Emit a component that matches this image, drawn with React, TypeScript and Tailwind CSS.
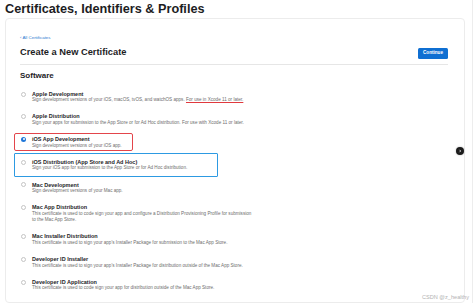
const certs = [
  {
    name: "Apple Development",
    desc: "Sign development versions of your iOS, macOS, tvOS, and watchOS apps.",
    note: "For use in Xcode 11 or later.",
  },
  {
    name: "Apple Distribution",
    desc: "Sign your apps for submission to the App Store or for Ad Hoc distribution. For use with Xcode 11 or later.",
  },
  { name: "iOS App Development", desc: "Sign development versions of your iOS app.", mark: "red", checked: true },
  {
    name: "iOS Distribution (App Store and Ad Hoc)",
    desc: "Sign your iOS app for submission to the App Store or for Ad Hoc distribution.",
    mark: "blue",
  },
  { name: "Mac Development", desc: "Sign development versions of your Mac app." },
  {
    name: "Mac App Distribution",
    desc: "This certificate is used to code sign your app and configure a Distribution Provisioning Profile for submission",
    more: "to the Mac App Store.",
  },
  {
    name: "Mac Installer Distribution",
    desc: "This certificate is used to sign your app's Installer Package for submission to the Mac App Store.",
  },
  {
    name: "Developer ID Installer",
    desc: "This certificate is used to sign your app's Installer Package for distribution outside of the Mac App Store.",
  },
  {
    name: "Developer ID Application",
    desc: "This certificate is used to code sign your app for distribution outside of the Mac App Store.",
  },
];

export default function App() {
  return (
    <div className="relative h-[303px] w-[474px] overflow-hidden bg-white font-['Liberation_Sans',Arial,sans-serif] text-[#1d1d1f]">
      <div className="h-full w-[473px] border-r border-[#ededed]">
        <h1 className="pl-[5px] pt-[2px] text-[12.7px] font-bold leading-[15px]">
          Certificates, Identifiers &amp; Profiles
        </h1>

        {/* card */}
        <div className="ml-[5px] mt-px w-[460px] rounded-[4px] border border-[#ececec] pb-[10px] pl-[14px] pr-[16px] pt-[16px]">
          <div className="text-[4.4px] leading-[6px] text-[#2b7bd0]">‹ All Certificates</div>
          <div className="mt-[7px] flex items-start justify-between">
            <div className="text-[9.3px] font-bold leading-[9px]">Create a New Certificate</div>
            <button className="flex h-[11px] w-[30px] items-center justify-center rounded-[1.5px] bg-[#0f6fd2] text-[4.6px] font-bold text-white">
              Continue
            </button>
          </div>
          <div className="mt-[5px] border-t border-[#e6e6e6]" />

          <div className="mt-[6px] text-[8px] font-bold leading-[10px]">Software</div>

          <div className="mt-[9.75px] flex flex-col gap-[9.7px]">
            {certs.map((c) => (
              <div key={c.name} className="relative flex items-start">
                <div
                  className={
                    c.checked
                      ? "ml-px mt-[0.75px] flex size-[5px] items-center justify-center rounded-full bg-[#1f76d8]"
                      : "ml-px mt-[0.75px] size-[5px] rounded-full border-[0.6px] border-[#c4c4c4]"
                  }
                >
                  {c.checked && <div className="size-[2px] rounded-full bg-white" />}
                </div>
                <div className="ml-[6px] whitespace-nowrap">
                  <div className="text-[5.5px] font-bold leading-[6.5px]">{c.name}</div>
                  <div className="text-[4.6px] leading-[6.5px] text-[#6e6e6e]">
                    {c.desc}
                    {c.note && (
                      <>
                        {" "}
                        <span className="underline decoration-[#e0393e] decoration-[0.8px] underline-offset-[1px]">
                          {c.note}
                        </span>
                      </>
                    )}
                    {c.more && (
                      <>
                        <br />
                        {c.more}
                      </>
                    )}
                  </div>
                </div>
                {c.mark === "red" && (
                  <div className="absolute left-[-6px] top-[-2.75px] h-[18px] w-[119px] rounded-[2px] border border-[#e3454b]" />
                )}
                {c.mark === "blue" && (
                  <div className="absolute left-[-6px] top-[-5.75px] h-[24px] w-[204px] rounded-[1px] border border-[#2d9ae2]" />
                )}
              </div>
            ))}
          </div>
        </div>
      </div>

      {/* floating next button */}
      <div className="absolute left-[456px] top-[146.5px] flex size-[8px] items-center justify-center rounded-full bg-[#1b1b1b] shadow-[0_0_2px_rgba(0,0,0,0.3)]">
        <svg width="4" height="4" viewBox="0 0 4 4">
          <path d="M1.5 0.8 L2.7 2 L1.5 3.2" stroke="white" strokeWidth="0.8" fill="none" />
        </svg>
      </div>

      <div className="absolute right-[5px] top-[294px] text-[5.6px] leading-[6px] text-[#b3b3b3]">CSDN @z_healthy</div>
    </div>
  );
}
